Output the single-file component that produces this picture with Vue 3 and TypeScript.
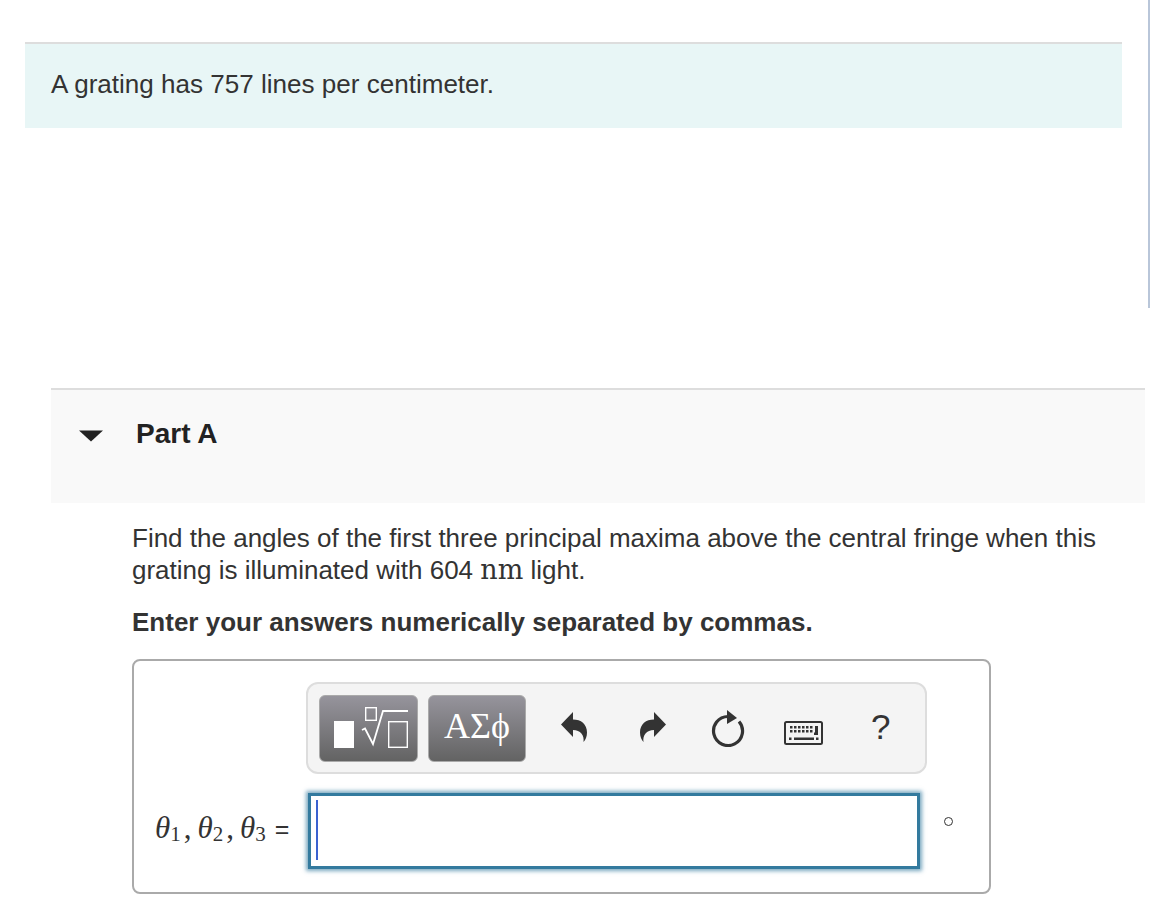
<script setup lang="ts">
const keyRows: number[][] = [
  [6, 10, 14, 18, 22, 26],
  [6, 10, 14, 18, 22, 26],
]
</script>

<template>
  <div class="page">
    <div class="scroll-mark"></div>
    <section class="intro">A grating has 757 lines per centimeter.</section>

    <section class="part">
      <header class="part-head">
        <svg class="caret-icon" width="24" height="12" viewBox="0 0 24 12" aria-hidden="true">
          <path d="M0 0.5H24L12 11.5Z" fill="#222" />
        </svg>
        <h2 class="part-title">Part A</h2>
      </header>

      <div class="part-body">
        <p class="question">
          <span class="line">Find the angles of the first three principal maxima above the central fringe when this</span>
          <span class="line">grating is illuminated with 604 <span class="unit">nm</span> light.</span>
        </p>
        <p class="instruction">Enter your answers numerically separated by commas.</p>

        <div class="answer">
          <div class="toolbar-row">
            <div class="toolbar">
              <button class="tool-btn template-btn" type="button" aria-label="Templates">
                <svg width="97" height="65" viewBox="0 0 97 65" aria-hidden="true">
                  <rect x="14" y="25" width="20" height="27" fill="#fff" />
                  <path d="M42 34l3-1.500 8 15.500 10-33h25" fill="none" stroke="#fff" stroke-width="1.800" />
                  <rect x="45.700" y="11.700" width="10.600" height="12.600" fill="none" stroke="#fff" stroke-width="1.400" />
                  <rect x="68.700" y="25.700" width="18.600" height="25.600" fill="none" stroke="#fff" stroke-width="1.400" />
                </svg>
              </button>
              <button class="tool-btn greek-btn" type="button">ΑΣϕ</button>

              <span class="tool-icon undo">
                <svg width="28" height="32" viewBox="0 0 28 32" aria-hidden="true">
                  <path d="M1 13.500 13 1v7.500c8 0 14 4.500 14 13 0 4-1.500 7.500-3.500 9.500 1-7-3-12-10.500-12v7Z" fill="#333" />
                </svg>
              </span>
              <span class="tool-icon redo">
                <svg width="28" height="32" viewBox="0 0 28 32" aria-hidden="true">
                  <path d="M27 13.500 15 1v7.500c-8 0-14 4.500-14 13 0 4 1.500 7.500 3.500 9.500-1-7 3-12 10.500-12v7Z" fill="#333" />
                </svg>
              </span>
              <span class="tool-icon reset">
                <svg width="34" height="38" viewBox="0 0 34 38" aria-hidden="true">
                  <path d="M17 7.500A14.500 14.500 0 1 0 28 12.500" fill="none" stroke="#333" stroke-width="3.200" />
                  <path d="M16 1 26 9 16 15Z" fill="#333" />
                </svg>
              </span>
              <span class="tool-icon keyboard">
                <svg width="39" height="24" viewBox="0 0 39 24" aria-hidden="true">
                  <rect x="1" y="1" width="37" height="22" rx="1.500" fill="#f4f4f4" stroke="#333" stroke-width="2" />
                  <g v-for="(row, r) in keyRows" :key="r" fill="#333">
                    <rect v-for="x in row" :key="x" :x="x" :y="5 + r * 4" width="2.500" height="2.500" />
                  </g>
                  <path d="M31 5h3v9h-4v-2.500h1Z" fill="#333" />
                  <rect x="5" y="16.500" width="2.500" height="2.500" fill="#333" />
                  <rect x="10" y="16.500" width="20" height="2.500" fill="#333" />
                  <rect x="32" y="16.500" width="2.500" height="2.500" fill="#333" />
                </svg>
              </span>
              <span class="tool-help">?</span>
            </div>
          </div>

          <div class="input-row">
            <div class="label">
              <i>θ</i><sub>1</sub><span class="comma">,</span><i>θ</i><sub>2</sub><span class="comma">,</span><i>θ</i><sub>3</sub><span class="eq">=</span>
            </div>
            <div class="field"><span class="text-caret"></span></div>
            <span class="degree"></span>
          </div>
        </div>
      </div>
    </section>
  </div>
</template>

<style scoped>
.page {
  position: relative;
  width: 1158px;
  height: 908px;
  box-sizing: border-box;
  padding-top: 42px;
  overflow: hidden;
  background: #fff;
  color: #333;
  font-family: "Liberation Sans", Arial, sans-serif;
}
.scroll-mark {
  position: absolute;
  left: 1148px;
  top: 0;
  width: 2px;
  height: 308px;
  background: #b9c6d9;
}
.intro {
  box-sizing: border-box;
  width: 1097px;
  height: 86px;
  margin-left: 25px;
  padding: 24px 26px 0;
  border-top: 2px solid #ddd;
  background: #e8f6f6;
  font-size: 26.05px;
  line-height: 32px;
}
.part {
  margin: 260px 0 0 51px;
  width: 1094px;
}
.part-head {
  box-sizing: border-box;
  display: flex;
  align-items: flex-start;
  height: 115px;
  border-top: 2px solid #ddd;
  background: #f9f9f9;
}
.caret-icon {
  margin: 40px 33px 0 28px;
}
.part-title {
  margin: 28px 0 0;
  font-size: 28px;
  line-height: 32px;
  font-weight: 700;
  color: #222;
}
.part-body {
  padding: 19px 0 0 81px;
}
.question {
  margin: 0;
  width: 985px;
  font-size: 26px;
  line-height: 32px;
}
.line {
  display: block;
  white-space: nowrap;
}
.unit {
  font-family: "DejaVu Serif", "Liberation Serif", serif;
  font-size: 27px;
  line-height: 1;
}
.instruction {
  margin: 20px 0 0;
  font-size: 26px;
  line-height: 32px;
  font-weight: 700;
}
.answer {
  box-sizing: border-box;
  width: 859px;
  height: 235px;
  margin-top: 21px;
  border: 2px solid #aaa;
  border-radius: 8px;
}
.toolbar-row {
  padding: 21px 0 0 172px;
}
.toolbar {
  box-sizing: border-box;
  display: flex;
  align-items: center;
  width: 621px;
  height: 92px;
  padding: 0 0 0 11px;
  border: 2px solid #ddd;
  border-radius: 12px;
  background: #f4f4f4;
}
.tool-btn {
  box-sizing: border-box;
  display: flex;
  align-items: center;
  justify-content: center;
  flex: none;
  height: 67px;
  padding: 0;
  border: 1px solid #aaa;
  border-radius: 6px;
  background: linear-gradient(#96949c, #636363);
  color: #fff;
}
.template-btn {
  width: 99px;
}
.greek-btn {
  width: 98px;
  margin-left: 10px;
  padding-bottom: 4px;
  font-family: "Liberation Serif", serif;
  font-size: 36px;
}
.tool-icon {
  display: flex;
  flex: none;
}
.undo {
  margin: 0 0 2px 34px;
}
.redo {
  margin: 0 0 2px 51px;
}
.reset {
  margin: 0 0 0 44px;
}
.keyboard {
  margin: 10px 0 0 39px;
}
.tool-help {
  margin: 0 0 2px 48px;
  font-size: 35px;
  line-height: 36px;
}
.input-row {
  display: flex;
  align-items: center;
  height: 78px;
  margin-top: 18px;
}
.label {
  box-sizing: border-box;
  display: flex;
  align-items: baseline;
  width: 174px;
  padding: 0 0 6px 21px;
  font-family: "Liberation Serif", serif;
  font-size: 31px;
  white-space: nowrap;
}
.label sub {
  font-size: 21px;
  line-height: 0;
  position: relative;
  top: 3px;
  vertical-align: baseline;
}
.comma {
  margin: 0 6px 0 3px;
}
.eq {
  margin-left: 9px;
  font-family: "Liberation Sans", sans-serif;
  font-size: 25px;
}
.field {
  box-sizing: border-box;
  position: relative;
  flex: none;
  width: 612px;
  height: 76px;
  border: 3px solid #337a9e;
  background: #fff;
  box-shadow: 0 0 4px 2px rgba(51, 122, 158, 0.65);
}
.text-caret {
  position: absolute;
  left: 5px;
  top: 4px;
  width: 2px;
  height: 60px;
  background: #3b62d0;
}
.degree {
  box-sizing: border-box;
  flex: none;
  width: 9px;
  height: 9px;
  margin: 0 0 19px 24px;
  border: 1.500px solid #333;
  border-radius: 50%;
}
</style>
